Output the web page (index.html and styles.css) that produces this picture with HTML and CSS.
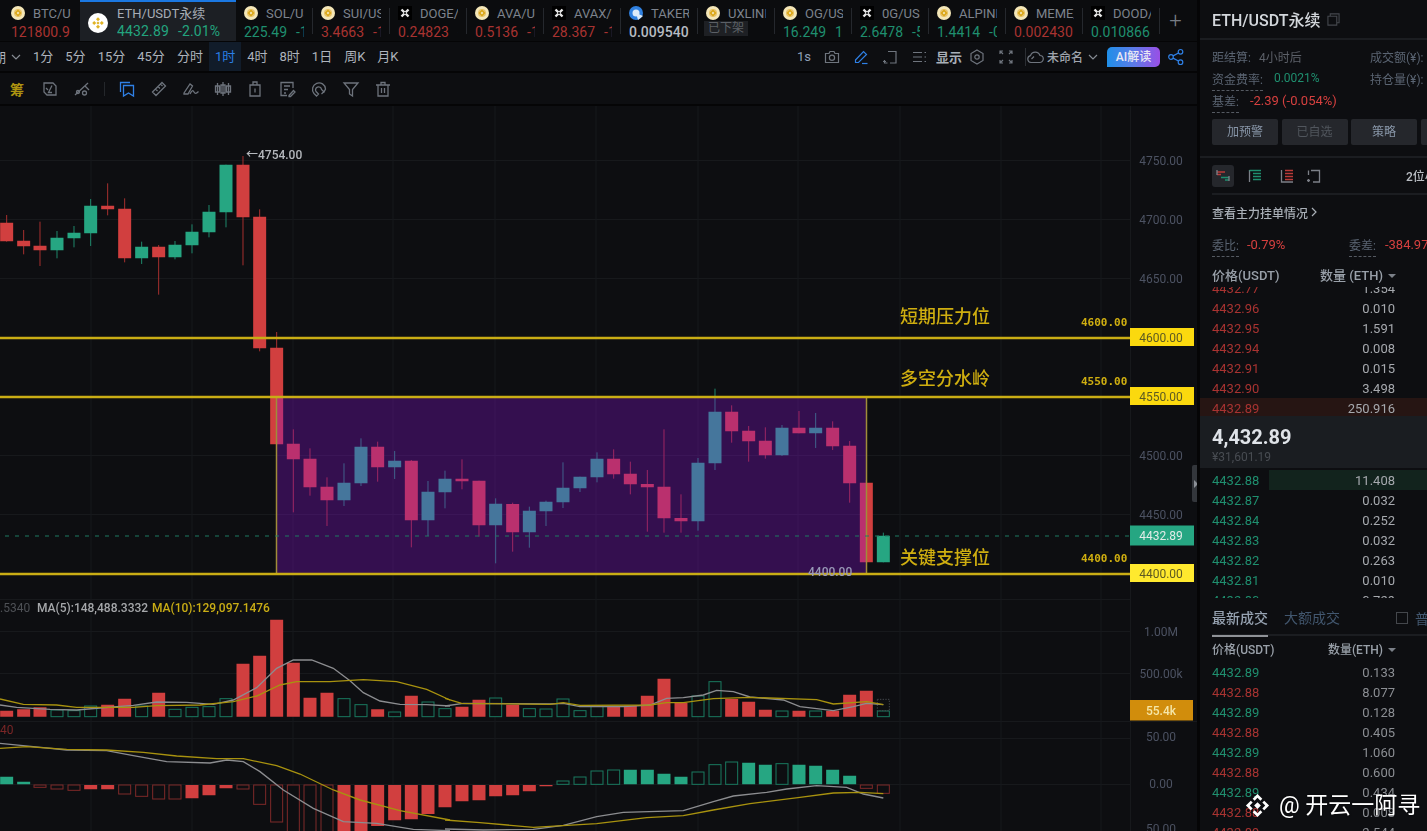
FILE: index.html
```html
<!DOCTYPE html>
<html lang="zh">
<head>
<meta charset="utf-8">
<title>ETH/USDT永续</title>
<link rel="stylesheet" href="styles.css">
</head>
<body>
<svg class="defs" width="0" height="0">
  <symbol id="coin" viewBox="0 0 14 14"><circle cx="7" cy="7" r="7" fill="#f4e7b8"/><circle cx="7" cy="7" r="4" fill="#e9c46a"/><path d="M7 3.6 10.4 7 7 10.4 3.6 7z" fill="#d9a514"/><path d="M7 5.6 8.4 7 7 8.4 5.6 7z" fill="#f4e7b8"/></symbol>
  <symbol id="xcoin" viewBox="0 0 14 14"><rect width="14" height="14" fill="#000"/><path d="M3.5 3.5 10.5 10.5M10.5 3.5 3.5 10.5" stroke="#e6e6e6" stroke-width="2.4"/><path d="M6 7h2" stroke="#000" stroke-width="1.4"/></symbol>
</svg>
<div class="app">
  <main class="main">
    <nav class="tabs">
      <div class="tab tab-first"><div class="tab-top"><svg class="coin"><use href="#coin"/></svg><span class="name">BTC/USDT</span></div><div class="tab-val dn">121800.9</div></div>
      <div class="tab tab-active">
        <svg class="eth-icon" viewBox="0 0 20 20"><circle cx="10" cy="10" r="10" fill="#fff"/><path d="M10 4.2 12 6.2 10 8.2 8 6.2zM6.2 8 8.2 10 6.2 12 4.2 10zM13.800 8 15.800 10 13.800 12 11.800 10zM10 8.400 11.600 10 10 11.600 8.400 10zM10 11.800 12 13.800 10 15.800 8 13.800z" fill="#e0b325"/></svg>
        <div class="tab-active-text"><div class="active-name">ETH/USDT永续</div><div class="tab-val up">4432.89<i></i>-2.01%</div></div>
      </div>
      <div class="tab"><div class="tab-top"><svg class="coin"><use href="#coin"/></svg><span class="name">SOL/USDT</span></div><div class="tab-val up">225.49<i></i>-1.2%</div></div>
      <div class="tab"><div class="tab-top"><svg class="coin"><use href="#coin"/></svg><span class="name">SUI/USDT</span></div><div class="tab-val dn">3.4663<i></i>-1.2%</div></div>
      <div class="tab"><div class="tab-top"><svg class="coin"><use href="#xcoin"/></svg><span class="name">DOGE/USDT</span></div><div class="tab-val dn">0.24823<i></i>-1.2%</div></div>
      <div class="tab"><div class="tab-top"><svg class="coin"><use href="#coin"/></svg><span class="name">AVA/USDT</span></div><div class="tab-val dn">0.5136<i></i>-1.2%</div></div>
      <div class="tab"><div class="tab-top"><svg class="coin"><use href="#xcoin"/></svg><span class="name">AVAX/USDT</span></div><div class="tab-val dn">28.367<i></i>-1.2%</div></div>
      <div class="tab"><div class="tab-top"><svg class="coin" viewBox="0 0 14 14"><circle cx="7" cy="7" r="7" fill="#2f80e0"/><circle cx="7" cy="7" r="3.500" fill="#dcebfa"/><path d="M7 7 14 10 9 14z" fill="#dcebfa"/></svg><span class="name">TAKER/USDT</span></div><div class="tab-val plain">0.009540</div></div>
      <div class="tab"><div class="tab-top"><svg class="coin"><use href="#coin"/></svg><span class="name">UXLINK/USDT</span></div><div class="tab-off">已下架</div></div>
      <div class="tab"><div class="tab-top"><svg class="coin"><use href="#coin"/></svg><span class="name">OG/USDT</span></div><div class="tab-val up">16.249<i></i>1.2%</div></div>
      <div class="tab"><div class="tab-top"><svg class="coin"><use href="#xcoin"/></svg><span class="name">0G/USDT</span></div><div class="tab-val up">2.6478<i></i>-5.2%</div></div>
      <div class="tab"><div class="tab-top"><svg class="coin"><use href="#coin"/></svg><span class="name">ALPINE/USDT</span></div><div class="tab-val up">1.4414<i></i>-0.2%</div></div>
      <div class="tab"><div class="tab-top"><svg class="coin"><use href="#coin"/></svg><span class="name">MEME/USDT</span></div><div class="tab-val dn">0.002430</div></div>
      <div class="tab"><div class="tab-top"><svg class="coin"><use href="#xcoin"/></svg><span class="name">DOOD/USDT</span></div><div class="tab-val up">0.010866</div></div>
      <div class="tab-plus">+</div>
    </nav>

    <div class="timebar">
      <div class="periods">
        <span class="period-clip">周期</span>
        <svg class="chev" viewBox="0 0 10 6"><path d="M1 1 5 5 9 1"/></svg>
        <span class="period">1分</span><span class="period">5分</span><span class="period">15分</span><span class="period">45分</span><span class="period">分时</span><span class="period period-active">1时</span><span class="period">4时</span><span class="period">8时</span><span class="period">1日</span><span class="period">周K</span><span class="period">月K</span>
      </div>
      <div class="timebar-right">
        <span class="one-s">1s</span>
        <svg class="ico" viewBox="0 0 18 18"><path d="M2.500 5.500H6L7 3.500H11L12 5.500H15.500V14.500H2.500Z"/><circle cx="9" cy="9.800" r="2.600"/></svg>
        <svg class="ico blue" viewBox="0 0 18 18"><path d="M3.500 12 11.500 3.500 14.500 6.500 6.500 14.500 3.500 14.500Z"/><path d="M10 15.500H15.500"/></svg>
        <svg class="ico" viewBox="0 0 18 18"><path d="M7 3.500H15V15H9M3.500 12V15H6.500M2 13.500H5"/></svg>
        <svg class="ico" viewBox="0 0 18 18"><path d="M3 4.500H12M3 9H12M3 13.500H12M14.500 4.500H16M14.500 9H16M14.500 13.500H16"/></svg>
        <span class="show-label">显示</span>
        <svg class="ico" viewBox="0 0 18 18"><path d="M9 2 15 5.500V12.500L9 16 3 12.500V5.500Z"/><circle cx="9" cy="9" r="2.200"/></svg>
        <svg class="ico" viewBox="0 0 18 18"><path d="M3 6V3H6M12 3H15V6M15 12V15H12M6 15H3V12M3 3 6 6M15 3 12 6M15 15 12 12M3 15 6 12"/></svg>
        <span class="vsep"></span>
        <svg class="ico cloud" viewBox="0 0 18 18"><path d="M5 14.500A3.500 3.500 0 0 1 4.500 7.600 5 5 0 0 1 14 7.500 3.500 3.500 0 0 1 13.500 14.500ZM5.500 11 8 8.500"/></svg>
        <span class="layout-name">未命名</span>
        <svg class="chev chev-right" viewBox="0 0 10 6"><path d="M1 1 5 5 9 1"/></svg>
        <span class="ai-btn">AI解读</span>
        <svg class="ico blue" viewBox="0 0 18 18"><circle cx="13.500" cy="3.800" r="2.300"/><circle cx="13.500" cy="14.200" r="2.300"/><circle cx="4" cy="9" r="2.300"/><path d="M6 7.900 11.500 5M6 10.100 11.500 13"/></svg>
      </div>
    </div>

    <div class="toolbar">
      <span class="chip-tool">筹</span>
      <svg class="tool" viewBox="0 0 18 18"><path d="M3 6V3H12L15 6V15H6L3 12Z"/><path d="M11 5.500 7.500 12.500H11M5 8 7 10"/></svg>
      <svg class="tool" viewBox="0 0 18 18"><path d="M2 15 15 3"/><circle cx="5" cy="12" r="1.500"/><circle cx="11.500" cy="13" r="2"/><path d="M12 6 16 10"/></svg>
      <span class="tool-sep"></span>
      <svg class="tool blue" viewBox="0 0 18 18"><path d="M2.500 12V2.500H12"/><path d="M5.500 5.500H15.500V16L10.500 13 5.500 16Z"/></svg>
      <svg class="tool" viewBox="0 0 18 18"><path d="M2.500 12 12 2.500 15.500 6 6 15.500ZM5.500 9 7.500 11M8 6.500 10 8.500M10.500 4 12.500 6"/></svg>
      <svg class="tool" viewBox="0 0 18 18"><path d="M2 13 8 4 10.500 6 6 14H2ZM8 14C10 10 11 10 12 12S14 14 16.500 11.500"/></svg>
      <svg class="tool" viewBox="0 0 18 18"><path d="M1.500 6H5.500V12H1.500ZM7 5H11V13H7ZM12.500 6H16.500V12H12.500ZM3.500 3V15M9 2V16M14.500 3V15"/></svg>
      <svg class="tool" viewBox="0 0 18 18"><path d="M4 5H14V16H4ZM7 5V2H11V5M9 8.500V12.500"/></svg>
      <svg class="tool" viewBox="0 0 18 18"><path d="M15 8V2.500H3V15.500H9M6 6H12M6 9.500H10M6 13H8M11 15.500 15.500 10.500 17 12 12.500 16.500H11Z"/></svg>
      <svg class="tool" viewBox="0 0 18 18"><path d="M15.500 9A6.500 6.500 0 1 0 4 13.500L6.500 16 8.500 14 6 11.500A3 3 0 1 1 11.500 9.500L14 12ZM11.500 14 14.500 11"/></svg>
      <svg class="tool" viewBox="0 0 18 18"><path d="M2 3H16L10.500 9.500V16L7.500 14V9.500Z"/></svg>
      <svg class="tool" viewBox="0 0 18 18"><path d="M2 5H16M4 5V16H14V5M7 5V2.500H11V5M7.500 8V13M10.500 8V13"/></svg>
    </div>

    <section class="chart">
      <svg class="chart-svg" viewBox="0 106 1197 725" width="1197" height="725">
        <path class="grid" d="M0 160.500H1130M0 219.500H1130M0 278.500H1130M0 337.500H1130M0 396.500H1130M0 455.500H1130M0 514.500H1130M0 573.500H1130M0 599.500H1130M0 631.500H1130M0 673.500H1130M0 721.500H1197M0 738.500H1130M0 784.500H1130M91 106V831M192 106V831M293 106V831M393 106V831M495 106V831M596 106V831M698 106V831M798 106V831M900 106V831M1001 106V831M1101 106V831M1130.500 106V831"/>

        <g transform="translate(0 130) scale(.33333)">
          <path class="wick-up" d="M171 303V385M222 288V352M272 207V348M425 335V402M525 333V388M576 283V370M627 225V322M678 104V292M1032 1000V1128M1083 925V1068M1184 963V1047M1284 1053V1218M1335 1022V1135"/>
          <path class="wick-dn" d="M20 255V335M71 300V373M120 275V408M323 160V256M374 205V397M476 345V494M729 78V406M779 238V664M830 606V943M880 898V1147M930 955V1097M981 1042V1188M1133 935V1055M1234 990V1252"/>
          <path class="body-up" d="M171 323V361M222 308V325M272 227V310M425 350V385M525 344V382M576 305V346M627 245V307M678 104V247M1032 1058V1111M1083 950V1060M1184 992V1012M1284 1085V1171M1335 1046V1087"/>
          <path class="body-dn" d="M20 278V334M71 332V349M120 347V361M323 227V238M374 236V385M476 350V382M729 104V262M779 260V655M830 653V943M880 941V988M930 986V1072M981 1070V1111M1133 950V1012M1234 992V1171"/>
        </g>
        <g transform="translate(450 370) scale(.33333)">
          <path class="wick-up" d="M137 385V580M238 410V533M288 392V468M339 277V414M390 320V366M441 247V337M744 264V482M795 56V300M996 165V258M1097 129V234M1300 488V577"/>
          <path class="wick-dn" d="M36 268V358M87 332V500M188 398V545M491 238V326M541 275V373M592 300V485M642 178V488M693 373V488M845 106V218M896 168V275M946 172V266M1047 123V190M1148 154V240M1199 213V398M1249 330V577"/>
          <path class="body-up" d="M137 401V466M238 422V487M288 395V424M339 353V397M390 320V355M441 266V322M744 278V454M795 125V280M996 173V256M1097 173V190M1300 497V577"/>
          <path class="body-dn" d="M36 326V334M87 332V466M188 402V487M491 266V313M541 311V343M592 342V352M642 350V445M693 444V454M845 125V184M896 182V214M946 212V256M1047 173V190M1148 173V229M1199 227V340M1249 338V577"/>
        </g>

        <rect class="zone" x="276.500" y="397" width="590" height="177"/>
        <path class="last-dash" d="M5 536H1130"/>
        <path class="level" d="M0 338H1130M0 397H1130M0 574H1130"/>

        <text class="hi-label" x="246" y="159">←<tspan dx="-3"> 4754.00</tspan></text>
        <text class="lo-label" x="808" y="576">4400.00</text>
        <text class="level-name" x="900" y="323">短期压力位</text>
        <text class="level-name" x="900" y="385">多空分水岭</text>
        <text class="level-name" x="900" y="564">关键支撑位</text>
        <text class="level-price" x="1081" y="326">4600.00</text>
        <text class="level-price" x="1081" y="385">4550.00</text>
        <text class="level-price" x="1081" y="562">4400.00</text>

        <text class="axis" x="1161" y="165">4750.00</text>
        <text class="axis" x="1161" y="224">4700.00</text>
        <text class="axis" x="1161" y="283">4650.00</text>
        <text class="axis" x="1161" y="460">4500.00</text>
        <text class="axis" x="1161" y="519">4450.00</text>
        <text class="axis" x="1161" y="636">1.00M</text>
        <text class="axis" x="1161" y="678">500.00k</text>
        <text class="axis" x="1161" y="741">50.00</text>
        <text class="axis" x="1161" y="788">0.00</text>
        <text class="axis" x="1161" y="833">50.00</text>

        <rect class="tag-y" x="1130" y="328" width="64" height="18"/>
        <text class="tag-text" x="1161" y="342">4600.00</text>
        <rect class="tag-y" x="1130" y="387" width="64" height="18"/>
        <text class="tag-text" x="1161" y="401">4550.00</text>
        <rect class="tag-y tag-y-bright" x="1130" y="564" width="64" height="18"/>
        <text class="tag-text" x="1161" y="578">4400.00</text>
        <rect class="tag-g" x="1130" y="525.500" width="64" height="20"/>
        <text class="tag-text-light" x="1161" y="540">4432.89</text>
        <rect class="tag-o" x="1130" y="700" width="63" height="20.500"/>
        <text class="tag-text-cream" x="1161" y="715">55.4k</text>

        <text class="ma-gray" x="0" y="612">.5340</text>
        <text class="ma-five" x="37" y="612">MA(5):148,488.3332</text>
        <text class="ma-ten" x="152" y="612">MA(10):129,097.1476</text>
        <text class="macd-val" x="0" y="734">40</text>

        <g transform="translate(0 590) scale(.33333)">
          <path class="body-dn" d="M20 362V380M71 358V380M120 352V380M323 344V380M374 326V380M476 308V380M729 221V380M779 197V380M830 89V380M880 218V380M930 323V380M981 308V380M1133 358V380M1234 317V380"/>
          <g class="hollow-up">
            <rect x="153" y="360" width="36" height="20"/><rect x="204" y="362" width="36" height="18"/><rect x="254" y="348" width="36" height="32"/><rect x="407" y="348" width="36" height="32"/><rect x="507" y="358" width="36" height="22"/><rect x="558" y="352" width="36" height="28"/><rect x="609" y="350" width="36" height="30"/><rect x="660" y="326" width="36" height="54"/><rect x="1014" y="326" width="36" height="54"/><rect x="1065" y="344" width="36" height="36"/><rect x="1166" y="366" width="36" height="14"/><rect x="1266" y="336" width="36" height="44"/><rect x="1317" y="356" width="36" height="24"/>
          </g>
          <polyline class="line-ma5" points="0,345 50,352 150,358 230,360 300,354 400,346 470,336 560,337 640,343 700,330 770,293 830,235 880,210 935,210 1000,235 1050,272 1090,308 1140,333 1200,343 1280,344 1350,348"/>
          <polyline class="line-ma10" points="0,327 70,343 170,345 230,352 300,352 400,352 470,347 600,345 700,335 770,318 840,285 890,275 990,275 1090,269 1190,275 1280,298 1350,330"/>

          <path class="body-up" d="M20 560V583M71 575V583"/>
          <path class="body-dn" d="M272 585V598M323 585V598M576 585V625M627 585V616M678 585V595M1032 585V730M1083 585V730M1133 585V708M1184 585V691M1234 585V688M1284 585V672M1335 585V652"/>
          <g class="hollow-dn">
            <rect x="102" y="585" width="36" height="7"/><rect x="153" y="585" width="36" height="12"/><rect x="204" y="585" width="36" height="16"/><rect x="356" y="585" width="36" height="27"/><rect x="407" y="585" width="36" height="34"/><rect x="458" y="585" width="36" height="42"/><rect x="507" y="585" width="36" height="42"/><rect x="711" y="585" width="36" height="12"/><rect x="761" y="585" width="36" height="58"/><rect x="812" y="585" width="36" height="111"/><rect x="862" y="585" width="36" height="160"/><rect x="912" y="585" width="36" height="160"/><rect x="963" y="585" width="36" height="160"/>
          </g>
          <polyline class="line-ma5" points="0,460 100,470 200,480 320,482 400,497 500,515 630,519 680,510 730,515 780,545 850,600 940,655 1030,695 1130,700 1240,718 1350,722"/>
          <polyline class="line-ma10" points="0,475 80,470 200,478 320,480 430,487 530,498 650,506 730,506 830,527 900,552 1000,600 1080,630 1200,662 1350,690"/>
        </g>

        <g transform="translate(450 590) scale(.33333)">
          <path class="body-dn" d="M36 350V380M87 329V380M188 344V380M491 350V380M541 347V380M592 317V380M642 266V380M693 338V380M845 327V380M896 335V380M946 359V380M1047 362V380M1148 362V380M1199 314V380M1249 302V380"/>
          <g class="hollow-up">
            <rect x="119" y="324" width="36" height="56"/><rect x="220" y="356" width="36" height="24"/><rect x="270" y="357" width="36" height="23"/><rect x="321" y="327" width="36" height="53"/><rect x="372" y="362" width="36" height="18"/><rect x="423" y="348" width="36" height="32"/><rect x="726" y="318" width="36" height="62"/><rect x="777" y="275" width="36" height="105"/><rect x="978" y="363" width="36" height="17"/><rect x="1079" y="363" width="36" height="17"/><rect x="1282" y="363" width="36" height="17"/>
          </g>
          <rect class="hollow-dash" x="1282" y="328" width="36" height="34"/>
          <polyline class="line-ma5" points="-15,348 40,340 300,342 340,340 390,350 520,350 600,345 650,325 700,323 760,315 800,301 850,305 900,321 1000,330 1050,350 1150,362 1210,350 1250,340 1300,344"/>
          <polyline class="line-ma10" points="-15,325 35,340 300,343 340,338 390,346 600,345 650,338 700,338 790,326 900,322 1100,329 1150,342 1250,335 1300,344"/>

          <path class="body-dn" d="M36 585V634M87 585V631M137 585V619M188 585V616M238 585V604M288 585V589"/>
          <path class="body-up" d="M541 539V583M592 539V583M642 551V583M693 560V583M896 518V583M946 524V583M1047 524V583M1097 527V583M1148 539V583M1199 557V583"/>
          <g class="hollow-up">
            <rect x="321" y="573" width="36" height="10"/><rect x="372" y="561" width="36" height="22"/><rect x="423" y="543" width="36" height="40"/><rect x="473" y="540" width="36" height="43"/><rect x="726" y="546" width="36" height="37"/><rect x="777" y="524" width="36" height="59"/><rect x="827" y="516" width="36" height="67"/><rect x="978" y="521" width="36" height="62"/>
          </g>
          <g class="hollow-dn">
            <rect x="1231" y="585" width="36" height="10"/><rect x="1282" y="585" width="36" height="25"/>
          </g>
          <polyline class="line-ma5" points="-15,717 100,720 250,718 340,706 440,680 520,667 700,662 790,635 850,618 950,607 1010,597 1100,587 1190,592 1240,612 1300,624"/>
          <polyline class="line-ma10" points="-15,690 90,698 250,712 440,701 590,683 700,677 790,660 900,641 1050,622 1150,609 1230,607 1300,611"/>
        </g>
      </svg>
      <div class="collapse"><svg viewBox="0 0 6 8" width="6" height="8"><path d="M1 0 5 4 1 8z" fill="#8b8f96"/></svg></div>
    </section>
  </main>

  <aside class="side">
    <header class="side-title"><h1>ETH/USDT永续</h1><svg class="copy" viewBox="0 0 14 14"><path d="M3.500 3V1H13V10.500H11M1 3.500H10.500V13H1Z"/></svg></header>
    <div class="stats">
      <div class="stat-row"><span class="lab">距结算:</span><span class="muted">4小时后</span><span class="lab stat-right">成交额(¥):</span></div>
      <div class="stat-row"><span class="lab dotted">资金费率:</span><span class="up">0.0021%</span><span class="lab stat-right">持仓量(¥):</span></div>
      <div class="stat-row"><span class="lab dotted">基差:</span><span class="dn-bright">-2.39 (-0.054%)</span></div>
      <div class="btns"><span class="btn">加预警</span><span class="btn btn-off">已自选</span><span class="btn">策略</span><span class="btn"></span></div>
    </div>
    <div class="book-tools">
      <span class="bt bt-active"><svg viewBox="0 0 14 14"><path class="s-dn" d="M1 3H9M1 5.500H5"/><path class="s-gr" d="M13 8.500H5M13 11H9"/><path class="s-lt" d="M1 1V6M13 7V12"/></svg></span>
      <span class="bt"><svg viewBox="0 0 14 14"><path class="s-lt" d="M1.500 1V13"/><path class="s-gr" d="M1.500 1.500H13M5 4.500H13M5 7.500H13M5 10.500H13"/></svg></span>
      <span class="bt"><svg viewBox="0 0 14 14"><path class="s-lt" d="M1.500 1V13H13"/><path class="s-dn" d="M5 1.500H13M5 4.500H13M5 7.500H13M5 10.500H13"/></svg></span>
      <span class="bt bt-small"><svg viewBox="0 0 14 14"><path class="s-lt" d="M4 1.500H12.500V13H6M1.500 10V13M0 11.500H3M1.500 1.500V6"/></svg></span>
      <span class="precision">2位小数</span>
    </div>
    <div class="main-orders">查看主力挂单情况<svg viewBox="0 0 6 10" width="6" height="10"><path d="M1 1 5 5 1 9"/></svg></div>
    <div class="ratio"><span class="lab dotted">委比:</span><span class="dn-bright">-0.79%</span><span class="ratio-right"><span class="lab dotted">委差:</span><span class="dn-bright">-384.97</span></span></div>
    <div class="col-head"><span>价格(USDT)</span><span class="col-qty">数量 (ETH)<i class="caret"></i></span></div>
    <div class="asks">
      <div class="row row-clip"><span class="dn">4432.77</span><span class="qty">1.354</span></div>
      <div class="row"><span class="dn">4432.96</span><span class="qty">0.010</span></div>
      <div class="row"><span class="dn">4432.95</span><span class="qty">1.591</span></div>
      <div class="row"><span class="dn">4432.94</span><span class="qty">0.008</span></div>
      <div class="row"><span class="dn">4432.91</span><span class="qty">0.015</span></div>
      <div class="row"><span class="dn">4432.90</span><span class="qty">3.498</span></div>
      <div class="row row-ask-hi"><span class="dn">4432.89</span><span class="qty">250.916</span></div>
    </div>
    <div class="mid"><div class="mid-price">4,432.89</div><div class="mid-cny">¥31,601.19</div></div>
    <div class="bids">
      <div class="row row-bid-hi"><span class="up">4432.88</span><span class="qty">11.408</span></div>
      <div class="row"><span class="up">4432.87</span><span class="qty">0.032</span></div>
      <div class="row"><span class="up">4432.84</span><span class="qty">0.252</span></div>
      <div class="row"><span class="up">4432.83</span><span class="qty">0.032</span></div>
      <div class="row"><span class="up">4432.82</span><span class="qty">0.263</span></div>
      <div class="row"><span class="up">4432.81</span><span class="qty">0.010</span></div>
      <div class="row"><span class="up">4432.80</span><span class="qty">0.729</span></div>
    </div>
    <div class="trade-tabs"><span class="tt tt-active">最新成交</span><span class="tt">大额成交</span><span class="tt-check"><i></i>普通</span></div>
    <div class="col-head col-head-small"><span>价格(USDT)</span><span class="col-qty">数量(ETH)<i class="caret"></i></span></div>
    <div class="trades">
      <div class="row"><span class="up">4432.89</span><span class="qty">0.133</span></div>
      <div class="row"><span class="dn">4432.88</span><span class="qty">8.077</span></div>
      <div class="row"><span class="up">4432.89</span><span class="qty">0.128</span></div>
      <div class="row"><span class="dn">4432.88</span><span class="qty">0.405</span></div>
      <div class="row"><span class="up">4432.89</span><span class="qty">1.060</span></div>
      <div class="row"><span class="dn">4432.88</span><span class="qty">0.600</span></div>
      <div class="row"><span class="up">4432.89</span><span class="qty">0.434</span></div>
      <div class="row"><span class="dn">4432.88</span><span class="qty">0.008</span></div>
      <div class="row"><span class="dn">4432.89</span><span class="qty">2.544</span></div>
    </div>
  </aside>

  <div class="watermark">
    <svg viewBox="0 0 28 28" width="27" height="27"><path d="M14 2 19 7 17 9 14 6 11 9 9 7ZM7 9 9 11 6 14 9 17 7 19 2 14ZM21 9 26 14 21 19 19 17 22 14 19 11ZM14 10.500 17.500 14 14 17.500 10.500 14ZM9 21 11 19 14 22 17 19 19 21 14 26Z" fill="#fff"/></svg>
    <span>@ 开云一阿寻</span>
  </div>
</div>
</body>
</html>
```

FILE: styles.css
```css
* { box-sizing: border-box; }
html, body { margin: 0; height: 100%; overflow: hidden; background: #0d0e11; }
body { font-family: Roboto, "Noto Sans CJK SC", sans-serif; color: #b7bdc6; }
.defs { position: absolute; }
.app { display: flex; width: 1427px; height: 831px; position: relative; overflow: hidden; }

/* main column */
.main { width: 1197px; flex: none; display: flex; flex-direction: column; overflow: hidden; filter: blur(.35px); }
.tabs { height: 41px; display: flex; flex: none; background: #0b0c0e; }
.tab { width: 77px; flex: none; padding: 5px 0 0 8px; position: relative; overflow: hidden; }
.tab::after { content: ""; position: absolute; right: 0; top: 8px; height: 26px; width: 1px; background: #25282d; }
.tab-first { width: 80px; padding-left: 11px; }
.tab-first::after { display: none; }
.tab-top { display: flex; align-items: center; gap: 8px; height: 16px; width: 60px; overflow: hidden; }
.coin { width: 14px; height: 14px; flex: none; }
.name { font-size: 13px; color: #7d838d; white-space: nowrap; }
.tab-val { font-size: 14px; line-height: 18px; margin-top: 2px; width: 60px; white-space: nowrap; overflow: hidden; }
.tab-val i { display: inline-block; width: 9px; }
.tab-active { width: 156px; display: flex; gap: 9px; align-items: center; padding: 2px 0 0 8px; background: #1c1f24; border-top: 2px solid #1b78e2; }
.tab-active::after { display: none; }
.tab-active .tab-val { width: auto; margin-top: 0; color: #23a57f; letter-spacing: .15px; }
.eth-icon { width: 20px; height: 20px; flex: none; }
.active-name { font-size: 13px; line-height: 17px; color: #a7adb6; }
.tab-off { font-size: 12px; line-height: 15px; width: 44px; margin-top: 0; margin-left: -2px; text-align: center; color: #5c6066; background: #1e2024; }
.tab-plus { flex: 1; text-align: center; color: #777c84; font-size: 22px; line-height: 41px; font-weight: 300; padding-right: 6px; }
.up { color: #1f8f6f; }
.dn { color: #a83331; }
.plain { color: #b6bbc2; font-weight: 500; }
.dn-bright { color: #d6403f; font-size: 13px; }

.timebar { height: 32px; flex: none; display: flex; justify-content: space-between; align-items: center; background: #0d0e11; border-top: 1px solid #050506; border-bottom: 2px solid #050506; }
.periods { display: flex; align-items: center; font-size: 13px; color: #aeb4bd; }
.period-clip { margin-left: -7px; width: 13px; overflow: hidden; white-space: nowrap; direction: rtl; }
.chev { width: 10px; height: 6px; fill: none; stroke: #868b93; stroke-width: 1.200; margin: 0 6px 0 5px; }
.period { padding: 0 6px; height: 29px; line-height: 29px; }
.period-active { color: #2a7fe6; background: #111c2a; }
.timebar-right { display: flex; align-items: center; padding-right: 1px; }
.one-s { font-size: 13px; color: #8fa0b8; margin-right: 12px; }
.ico { width: 18px; height: 18px; fill: none; stroke: #6f757e; stroke-width: 1.200; margin-right: 11px; }
.ico.blue, .tool.blue { stroke: #2f80e6; }
.show-label { font-size: 13px; font-weight: 700; color: #a9b0b8; margin: 0 6px 0 -3px; }
.vsep { width: 1px; height: 18px; background: #2b2e33; margin: 0 0 0 -1px; }
.cloud { margin-right: 3px; }
.layout-name { font-size: 12px; font-weight: 500; color: #a0a6ae; }
.chev-right { margin: 0 9px 0 5px; }
.ai-btn { width: 53px; height: 20px; line-height: 20px; text-align: center; font-size: 12px; font-weight: 500; color: #e8e8f4; margin-right: 7px; border-radius: 5px 5px 5px 0; background: linear-gradient(90deg, #1f8fe8, #5b7be8 50%, #9a4fe6); }

.toolbar { height: 33px; flex: none; display: flex; align-items: center; padding-left: 10px; gap: 14px; background: #0d0e11; border-bottom: 2px solid #050506; }
.chip-tool { font-size: 14px; font-weight: 700; color: #ad9410; width: 15px; margin-right: 2px; }
.tool { width: 18px; height: 18px; fill: none; stroke: #6d737c; stroke-width: 1.300; }
.tool-sep { width: 1px; height: 14px; background: #24272b; margin: 0 -1px; }

.chart { flex: 1; position: relative; overflow: hidden; }
.chart-svg { display: block; }
.grid { stroke: #17191c; stroke-width: 1; fill: none; }
.wick-up, .wick-dn { stroke-width: 3; fill: none; }
.wick-up { stroke: #1f8a6b; }
.wick-dn { stroke: #a8302f; }
.body-up, .body-dn { stroke-width: 39; fill: none; }
.body-up { stroke: #26a682; }
.body-dn { stroke: #d13f3f; }
.hollow-up rect, .hollow-dn rect, .hollow-dash { fill: #0d0e11; stroke-width: 3; }
.hollow-up rect { stroke: #1a7a60; }
.hollow-dn rect { stroke: #7f2a2a; }
.hollow-dash { fill: none; stroke: #44474c; stroke-dasharray: 4 4; }
.zone { fill: rgba(138, 20, 211, .32); stroke: #a08c3a; stroke-width: 1.500; }
.last-dash { stroke: #1f7a62; stroke-width: 1; stroke-dasharray: 4 6; fill: none; }
.level { stroke: #c9ad15; stroke-width: 2.500; fill: none; }
.line-ma5, .line-ma10 { fill: none; stroke-width: 4; }
.line-ma5 { stroke: #8c8d90; }
.line-ma10 { stroke: #a8920f; }
.hi-label { font-size: 12px; font-weight: 500; fill: #b5b8bd; }
.lo-label { font-size: 12px; font-weight: 500; fill: #9a9ab8; }
.level-name { font-size: 18px; font-weight: 500; fill: #cfae10; }
.level-price { font-family: "DejaVu Sans Mono", monospace; font-size: 11px; font-weight: 700; fill: #cfae10; }
.axis { font-size: 12px; fill: #4c5262; text-anchor: middle; }
.tag-y { fill: #fbd90e; }
.tag-y-bright { fill: #ffe92e; }
.tag-g { fill: #26a682; }
.tag-o { fill: #d18d0c; }
.tag-text, .tag-text-light, .tag-text-cream { font-size: 12px; text-anchor: middle; }
.tag-text { fill: #5d5a22; }
.tag-text-light { fill: #e2ece8; }
.tag-text-cream { fill: #f5e6a8; font-weight: 500; }
.ma-gray { font-size: 12px; fill: #4e5156; }
.ma-five { font-size: 12px; font-weight: 500; fill: #a6a8ab; }
.ma-ten { font-size: 12px; font-weight: 500; fill: #c9ad15; }
.macd-val { font-size: 12px; fill: #7a2626; }
.collapse { position: absolute; left: 1192px; top: 359px; width: 7px; height: 37px; display: flex; align-items: center; justify-content: center; border-radius: 2px; background: #33363b; }

/* side column */
.side { width: 230px; flex: none; background: #0d0e11; border-left: 3px solid #050506; display: flex; flex-direction: column; overflow: hidden; font-size: 12px; filter: blur(.35px); position: relative; }
.side-title { height: 40px; flex: none; display: flex; align-items: center; gap: 6px; padding-left: 12px; border-bottom: 2px solid #1b1d21; }
.side-title h1 { margin: 0; font-size: 16px; font-weight: 500; color: #d3d7dc; white-space: nowrap; }
.copy { width: 13px; height: 13px; fill: none; stroke: #44474d; stroke-width: 1.200; }
.stats { height: 118px; flex: none; padding: 5px 0 0 12px; border-bottom: 2px solid #1b1d21; }
.stat-row { height: 22px; display: flex; align-items: center; gap: 6px; white-space: nowrap; position: relative; }
.lab { color: #5a6472; }
.muted { color: #5c6068; margin-left: 2px; }
.stat-right { position: absolute; left: 158px; }
.dotted { border-bottom: 1px dashed #555a62; padding-bottom: 3px; margin-top: 5px; }
.stat-row .dotted { margin-right: 5px; }
.ratio .dotted { margin-right: 2px; }
.btns { display: flex; gap: 3.500px; margin-top: 8px; width: 260px; }
.btn { width: 66px; height: 26px; flex: none; line-height: 26px; text-align: center; border-radius: 2px; background: #25272c; font-size: 12px; color: #8896a8; }
.btn-off { color: #51565d; }
.book-tools { height: 37px; flex: none; margin: 0 0 0 12px; display: flex; align-items: center; border-bottom: 2px solid #1b1d21; position: relative; }
.bt { width: 22px; height: 22px; margin-right: 10px; display: flex; align-items: center; justify-content: center; border-radius: 3px; }
.bt svg { width: 14px; height: 14px; fill: none; stroke-width: 1.300; }
.bt-active { background: #25272c; }
.bt-small { margin-left: -5px; }
.s-dn { stroke: #bb3b39; }
.s-gr { stroke: #1f8f6f; }
.s-lt { stroke: #7c8088; }
.precision { position: absolute; left: 194px; font-size: 12px; font-weight: 500; color: #b9bdc3; white-space: nowrap; }
.main-orders { height: 34px; flex: none; padding-left: 12px; display: flex; align-items: center; gap: 3px; font-size: 12px; font-weight: 500; color: #a9afb7; }
.main-orders svg { fill: none; stroke: #a9afb7; stroke-width: 1.200; }
.ratio { height: 30px; flex: none; padding: 0 0 0 12px; display: flex; align-items: center; gap: 6px; white-space: nowrap; position: relative; }
.ratio-right { position: absolute; left: 149px; display: flex; gap: 6px; align-items: center; }
.ratio-right .dotted { margin-right: 3px; }
.col-head { height: 28px; flex: none; padding: 2px 0 0 12px; display: flex; align-items: center; font-size: 13px; font-weight: 500; color: #99a0a9; position: relative; }
.col-qty { position: absolute; right: 31px; white-space: nowrap; }
.caret { display: inline-block; margin-left: 5px; vertical-align: 2px; border: 4px solid transparent; border-top: 4px solid #7b8088; border-bottom-width: 0; }
.asks { height: 129px; flex: none; overflow: hidden; padding-top: 0; }
.row { height: 20px; padding: 0 32px 0 12px; display: flex; justify-content: space-between; align-items: center; font-size: 13px; flex: none; }
.row-clip { margin-top: -9px; }
.qty { color: #a6a9ae; }
.row-ask-hi { background: #261513; }
.row-bid-hi { background: linear-gradient(90deg, transparent 69px, #12231d 69px); }
.mid { height: 52px; flex: none; padding: 10px 0 0 12px; background: #1a1d21; }
.mid-price { font-size: 20px; line-height: 22px; font-weight: 700; color: #dfe3e8; }
.mid-cny { font-size: 12px; line-height: 15px; color: #484c52; margin-top: 2px; }
.bids { height: 129px; flex: none; overflow: hidden; padding-top: 1px; margin-top: 1px; }
.trade-tabs { height: 38px; flex: none; margin-left: 12px; display: flex; align-items: center; gap: 16px; font-size: 14px; padding-top: 4px; border-bottom: 2px solid #1b1d21; position: relative; }
.tt { height: 34px; line-height: 34px; color: #42576f; }
.tt-active { color: #97a3b2; font-weight: 500; position: relative; }
.tt-active::after { content: ""; position: absolute; left: 0; right: 0; bottom: -2px; height: 2px; background: #8f9297; }
.tt-check { position: absolute; left: 184px; display: flex; align-items: center; gap: 7px; color: #42576f; white-space: nowrap; }
.tt-check i { width: 12px; height: 12px; border: 1px solid #44474c; }
.col-head-small { height: 21px; font-size: 12px; padding-top: 3px; }
.trades { flex: 1; padding-top: 5px; overflow: hidden; }
.trades .qty { color: #8b8e93; }

.watermark { position: absolute; left: 1244px; top: 792px; display: flex; align-items: center; gap: 8px; color: #fff; font-size: 23px; line-height: 27px; white-space: nowrap; text-shadow: 0 0 2px rgba(0,0,0,.6); }
```
